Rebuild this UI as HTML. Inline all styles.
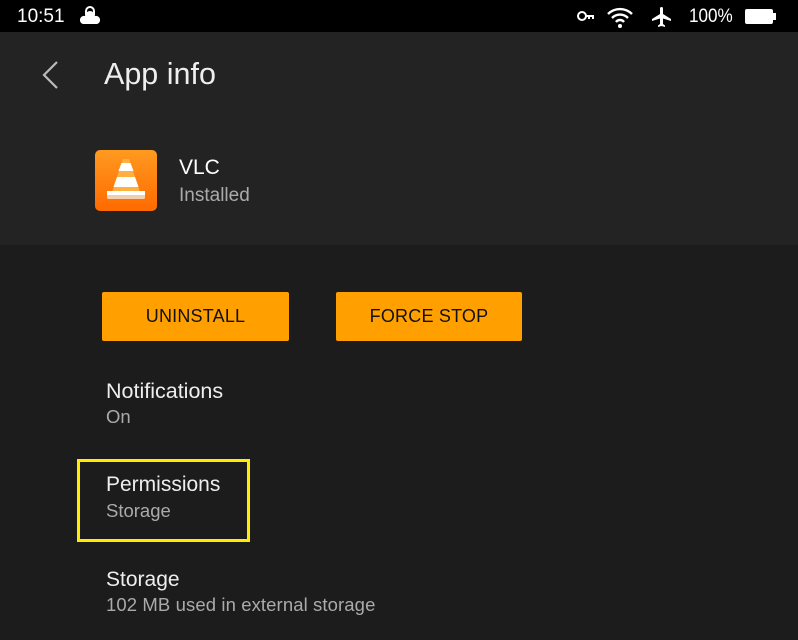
<!DOCTYPE html>
<html><head><style>
body{margin:0;width:798px;height:640px;background:#1c1c1c;font-family:"Liberation Sans",sans-serif;overflow:hidden;position:relative;color:#fff}
.a{position:absolute;white-space:nowrap}
</style></head><body>
<div class="a" style="left:0;top:0;width:798px;height:32px;background:#000"></div>
<div class="a" style="left:17px;top:6px;font-size:19px;color:#fff">10:51</div>
<svg class="a" style="left:80px;top:5px" width="20" height="20" viewBox="0 0 18 20"><path d="M5 10V6a4 4 0 0 1 8 0v4" fill="none" stroke="#fff" stroke-width="2"/><path d="M2 19a4 4 0 0 1 2-8a5 5 0 0 1 10 0a4 4 0 0 1 2 8z" fill="#fff"/></svg>
<svg class="a" style="left:577px;top:10px" width="18" height="12" viewBox="0 0 18 12"><circle cx="5" cy="6" r="4" fill="none" stroke="#fff" stroke-width="2"/><path d="M9 5h8v4h-2V7h-2v2h-2V7H9z" fill="#fff"/></svg>
<svg class="a" style="left:606px;top:6px" width="28" height="22" viewBox="0 0 28 22"><path d="M2 8a17 17 0 0 1 24 0M6 12a11 11 0 0 1 16 0M10 16a5 5 0 0 1 8 0" fill="none" stroke="#fff" stroke-width="2.4"/><circle cx="14" cy="20" r="2" fill="#fff"/></svg>
<svg class="a" style="left:650px;top:5px" width="24" height="24" viewBox="0 0 24 24"><path d="M21 16v-2l-8-5V3.5a1.5 1.5 0 0 0-3 0V9l-8 5v2l8-2.5V19l-2 1.5V22l3.5-1 3.5 1v-1.5L13 19v-5.5z" fill="#fff"/></svg>
<div class="a" style="left:689px;top:6px;font-size:19px;transform:scaleX(0.9);transform-origin:0 0">100%</div>
<div class="a" style="left:745px;top:9px;width:28px;height:15px;background:#fff;border-radius:2px"></div>
<div class="a" style="left:773px;top:13px;width:3px;height:7px;background:#fff"></div>

<div class="a" style="left:0;top:32px;width:798px;height:213px;background:#232323"></div>
<svg class="a" style="left:38px;top:60px" width="24" height="30" viewBox="0 0 24 30"><path d="M19 2L6 15l13 13" fill="none" stroke="#bbb" stroke-width="2.2"/></svg>
<div class="a" style="left:104px;top:57px;font-size:30.5px;color:#eee">App info</div>

<div class="a" style="left:95px;top:150px;width:62px;height:61px;border-radius:5px;background:linear-gradient(#ff9a20,#ff6a00)"></div>
<svg class="a" style="left:95px;top:150px" width="62" height="61" viewBox="0 0 62 61"><path d="M28 9h6l11 33H17z" fill="#ffb040"/><path d="M26.5 13h9l3 8h-15zM22 27h18l3.5 10h-25z" fill="#fff"/><path d="M12 41h38v6a2 2 0 0 1-2 2H14a2 2 0 0 1-2-2z" fill="#fff"/><path d="M12 45h38v2a2 2 0 0 1-2 2H14a2 2 0 0 1-2-2z" fill="#f0d0b0"/></svg>
<div class="a" style="left:179px;top:156px;font-size:21px;color:#fff">VLC</div>
<div class="a" style="left:179px;top:185px;font-size:19px;color:#aaa">Installed</div>

<div class="a" style="left:102px;top:292px;width:187px;height:49px;background:#ffa000;border-radius:2px;color:#111;font-size:18px;letter-spacing:0.2px;text-align:center;line-height:49px">UNINSTALL</div>
<div class="a" style="left:336px;top:292px;width:186px;height:49px;background:#ffa000;border-radius:2px;color:#111;font-size:18px;letter-spacing:0.2px;text-align:center;line-height:49px">FORCE STOP</div>

<div class="a" style="left:106px;top:379px;font-size:21.5px;color:#eee">Notifications</div>
<div class="a" style="left:106px;top:406px;font-size:18.5px;color:#aaa">On</div>
<div class="a" style="left:77px;top:459px;width:167px;height:77px;border:3px solid #ffec00"></div>
<div class="a" style="left:106px;top:473px;font-size:21px;color:#eee">Permissions</div>
<div class="a" style="left:106px;top:500px;font-size:18.5px;color:#aaa">Storage</div>
<div class="a" style="left:106px;top:568px;font-size:21px;color:#eee">Storage</div>
<div class="a" style="left:106px;top:594px;font-size:18.5px;color:#aaa;letter-spacing:0.1px">102 MB used in external storage</div>
</body></html>
